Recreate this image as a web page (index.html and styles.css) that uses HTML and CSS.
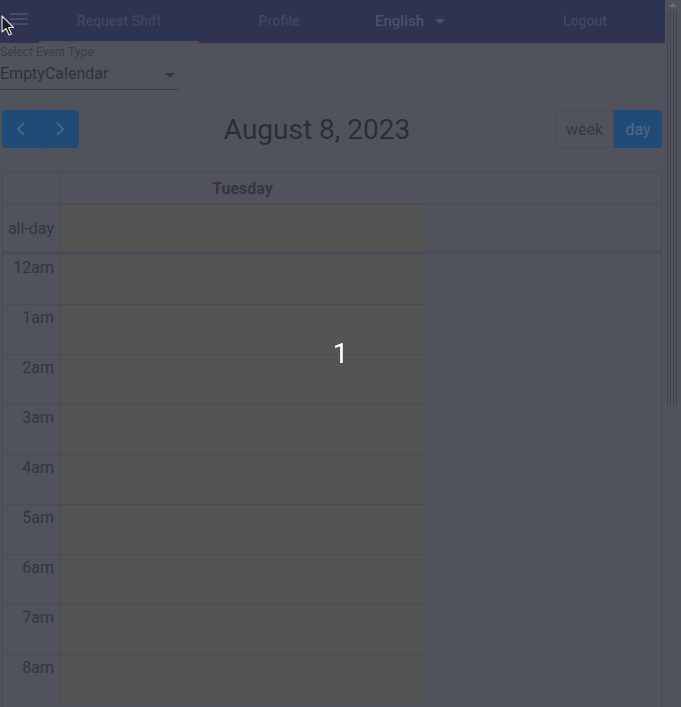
FILE: index.html
```html
<!DOCTYPE html>
<html lang="en">
<head>
<meta charset="utf-8">
<title>Calendar</title>
<link rel="stylesheet" href="styles.css">
</head>
<body>
<div class="app">
  <div class="main">
    <nav class="navbar">
      <div class="menu-btn">
        <svg width="18" height="12" viewBox="0 0 18 12"><rect x="0" y="0" width="18" height="2" fill="#454c63"/><rect x="0" y="5" width="18" height="2" fill="#454c63"/><rect x="0" y="10" width="18" height="2" fill="#454c63"/></svg>
      </div>
      <div class="tab active">Request Shift</div>
      <div class="tab">Profile</div>
      <div class="lang">English <span class="caret"></span></div>
      <div class="tab">Logout</div>
    </nav>

    <div class="field">
      <div class="field-label">Select Event Type</div>
      <div class="field-input">EmptyCalendar <span class="caret dark"></span></div>
    </div>

    <div class="toolbar">
      <div class="btn-group">
        <button class="btn primary nav-btn"><svg width="12" height="16" viewBox="0 0 12 16"><path d="M9 2 L3 8 L9 14" fill="none" stroke="#516a86" stroke-width="1.6"/></svg></button>
        <button class="btn primary nav-btn"><svg width="12" height="16" viewBox="0 0 12 16"><path d="M3 2 L9 8 L3 14" fill="none" stroke="#516a86" stroke-width="1.6"/></svg></button>
      </div>
      <h2 class="title">August 8, 2023</h2>
      <div class="btn-group">
        <button class="btn outline">week</button>
        <button class="btn primary day">day</button>
      </div>
    </div>

    <div class="cal">
      <div class="row head">
        <div class="axis"></div>
        <div class="col">Tuesday</div>
        <div class="rest"></div>
      </div>
      <div class="row allday">
        <div class="axis">all-day</div>
        <div class="col today"></div>
        <div class="rest"></div>
      </div>
      <div class="divider"></div>
      <div class="slots">
        <div class="slot hour"><div class="axis">12am</div><div class="col today"></div><div class="rest"></div></div>
        <div class="slot half"><div class="axis"></div><div class="col today"></div><div class="rest"></div></div>
        <div class="slot hour"><div class="axis">1am</div><div class="col today"></div><div class="rest"></div></div>
        <div class="slot half"><div class="axis"></div><div class="col today"></div><div class="rest"></div></div>
        <div class="slot hour"><div class="axis">2am</div><div class="col today"></div><div class="rest"></div></div>
        <div class="slot half"><div class="axis"></div><div class="col today"></div><div class="rest"></div></div>
        <div class="slot hour"><div class="axis">3am</div><div class="col today"></div><div class="rest"></div></div>
        <div class="slot half"><div class="axis"></div><div class="col today"></div><div class="rest"></div></div>
        <div class="slot hour"><div class="axis">4am</div><div class="col today"></div><div class="rest"></div></div>
        <div class="slot half"><div class="axis"></div><div class="col today"></div><div class="rest"></div></div>
        <div class="slot hour"><div class="axis">5am</div><div class="col today"></div><div class="rest"></div></div>
        <div class="slot half"><div class="axis"></div><div class="col today"></div><div class="rest"></div></div>
        <div class="slot hour"><div class="axis">6am</div><div class="col today"></div><div class="rest"></div></div>
        <div class="slot half"><div class="axis"></div><div class="col today"></div><div class="rest"></div></div>
        <div class="slot hour"><div class="axis">7am</div><div class="col today"></div><div class="rest"></div></div>
        <div class="slot half"><div class="axis"></div><div class="col today"></div><div class="rest"></div></div>
        <div class="slot hour"><div class="axis">8am</div><div class="col today"></div><div class="rest"></div></div>
        <div class="slot half"><div class="axis"></div><div class="col today"></div><div class="rest"></div></div>
      </div>
    </div>
  </div>

  <div class="scrollbar">
    <div class="sb-arrow"></div>
    <div class="sb-thumb"></div>
  </div>
</div>

<svg class="cursor" width="16" height="22" viewBox="0 0 16 22"><path d="M1 1 L1 17 L5 13.5 L8 20 L10.5 19 L7.5 12.5 L12.5 12.5 Z" fill="#1c1d22" stroke="#d8d8d8" stroke-width="1.2" stroke-linejoin="round"/></svg>

<div class="counter">1</div>
</body>
</html>
```

FILE: styles.css
```css
* { box-sizing: border-box; }

html, body {
  margin: 0;
  padding: 0;
  width: 681px;
  height: 707px;
  overflow: hidden;
  background: #50535c;
  font-family: Roboto, "Liberation Sans", sans-serif;
  color: #2e3139;
}

.app {
  display: flex;
  height: 707px;
  overflow: hidden;
}

.main {
  width: 665px;
  flex: none;
}

/* navbar */
.navbar {
  height: 43px;
  background: #2d3350;
  display: grid;
  grid-template-columns: 39px 160px 160px 146px 160px;
  align-items: stretch;
  font-size: 14px;
  font-weight: 500;
  color: #41475e;
}

.menu-btn {
  display: flex;
  align-items: center;
  padding-left: 10px;
  padding-bottom: 5px;
}

.tab {
  display: flex;
  align-items: center;
  justify-content: center;
  border-bottom: 2px solid transparent;
}

.tab.active {
  border-bottom-color: #4c5059;
}

.lang {
  display: flex;
  align-items: center;
  padding-left: 16px;
  padding-bottom: 2px;
  color: #4d5369;
  font-size: 15px;
}

.caret {
  display: inline-block;
  width: 0;
  height: 0;
  border-left: 5px solid transparent;
  border-right: 5px solid transparent;
  border-top: 5px solid #4d5369;
  margin-left: 11px;
  margin-top: 2px;
}

.caret.dark {
  border-top-color: #33363e;
  margin-left: 0;
}

/* select field */
.field {
  width: 179px;
  margin-top: 2px;
}

.field-label {
  font-size: 12px;
  line-height: 14px;
  color: #3b3e47;
}

.field-input {
  display: flex;
  justify-content: space-between;
  align-items: center;
  font-size: 16px;
  line-height: 20px;
  padding: 5px 4px 5px 0;
  border-bottom: 1px solid #3a3d45;
  color: #2f3239;
}

/* toolbar */
.toolbar {
  display: flex;
  justify-content: space-between;
  align-items: center;
  margin-top: 20px;
  padding: 0 3px 0 2px;
  height: 38px;
}

.btn-group {
  display: flex;
  height: 38px;
}

.btn {
  font-family: Roboto, "Liberation Sans", sans-serif;
  font-size: 16px;
  height: 38px;
  margin: 0;
  border: 1px solid transparent;
  padding: 0 12px;
  display: flex;
  align-items: center;
  justify-content: center;
}

.btn.primary {
  background: #214b77;
  border-color: #214b77;
  color: #516a86;
}

.nav-btn {
  width: 38.5px;
  padding: 0;
}

.btn-group .btn:first-child {
  border-radius: 4px 0 0 4px;
}

.btn-group .btn:last-child {
  border-radius: 0 4px 4px 0;
}

.btn.outline {
  background: transparent;
  border-color: #484b54;
  color: #363942;
  width: 59px;
}

.btn.day {
  width: 48px;
}

.title {
  margin: 0;
  font-size: 28px;
  font-weight: 400;
  color: #2b2e36;
  line-height: 38px;
  padding-top: 1px;
}

/* calendar */
.cal {
  margin: 24px 3px 0 2px;
  border: 1px solid #484b55;
  border-bottom: none;
  height: 535px;
  overflow: hidden;
}

.row, .slot {
  display: grid;
  grid-template-columns: 57px 365px 1fr;
}

.row.head {
  height: 32px;
  border-bottom: 1px solid #484b55;
}

.row.head .axis {
  border-right: 1px solid #484b55;
}

.row.head .col {
  display: flex;
  align-items: center;
  justify-content: center;
  font-weight: 700;
  font-size: 16px;
  color: #33363e;
}

.row.allday {
  height: 47px;
  border-bottom: 1px solid #484b55;
}

.axis {
  text-align: right;
  padding-right: 5px;
  font-size: 16px;
  color: #33363e;
}

.row.allday .axis {
  display: flex;
  align-items: center;
  justify-content: flex-end;
  border-right: 1px solid #484b55;
}

.today {
  background: #535552;
}

.divider {
  height: 2px;
  background: #4a4d57;
}

.slot {
  height: 25px;
}

.slot .axis {
  border-right: 1px solid #484b55;
  line-height: 25px;
}

.slot.hour .axis,
.slot.hour .col {
  border-top: 1px solid #4a4d55;
}

.slot.half .col {
  border-top: 1px dotted #4b4d52;
}

/* scrollbar */
.scrollbar {
  width: 16px;
  flex: none;
  padding: 0 2px 0 2px;
}

.sb-arrow {
  width: 0;
  height: 0;
  margin: 3px auto 0;
  border-left: 4px solid transparent;
  border-right: 4px solid transparent;
  border-bottom: 4px solid #6a6d76;
}

.sb-thumb {
  margin-top: 4px;
  height: 394px;
  background: repeating-linear-gradient(90deg, #41444d 0 1px, #50535c 1px 3px);
}

/* overlays */
.cursor {
  position: fixed;
  left: 1px;
  top: 15px;
}

.counter {
  position: fixed;
  inset: 0;
  display: flex;
  align-items: center;
  justify-content: center;
  color: #ffffff;
  font-size: 28px;
  font-family: Roboto, "Liberation Sans", sans-serif;
  pointer-events: none;
}
```
